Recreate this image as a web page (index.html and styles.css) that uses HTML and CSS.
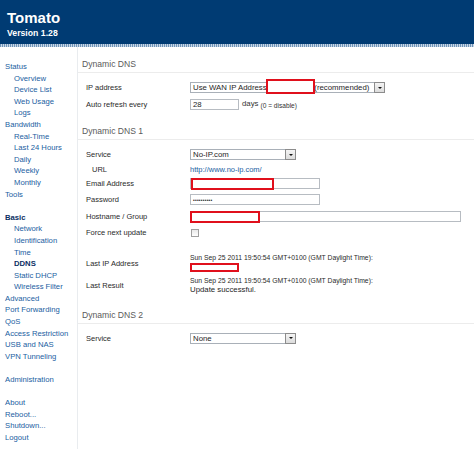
FILE: index.html
```html
<!DOCTYPE html>
<html>
<head>
<meta charset="utf-8">
<title>Tomato</title>
<link rel="stylesheet" href="styles.css">
</head>
<body>
<header class="header">
  <div class="title">Tomato</div>
  <div class="version">Version 1.28</div>
</header>
<div class="layout">
  <nav class="sidebar">
    <a class="top">Status</a>
    <a class="sub">Overview</a>
    <a class="sub">Device List</a>
    <a class="sub">Web Usage</a>
    <a class="sub">Logs</a>
    <a class="top">Bandwidth</a>
    <a class="sub">Real-Time</a>
    <a class="sub">Last 24 Hours</a>
    <a class="sub">Daily</a>
    <a class="sub">Weekly</a>
    <a class="sub">Monthly</a>
    <a class="top">Tools</a>
    <div class="gap"></div>
    <a class="top active">Basic</a>
    <a class="sub">Network</a>
    <a class="sub">Identification</a>
    <a class="sub">Time</a>
    <a class="sub active">DDNS</a>
    <a class="sub">Static DHCP</a>
    <a class="sub">Wireless Filter</a>
    <a class="top">Advanced</a>
    <a class="top">Port Forwarding</a>
    <a class="top">QoS</a>
    <a class="top">Access Restriction</a>
    <a class="top">USB and NAS</a>
    <a class="top">VPN Tunneling</a>
    <div class="gap"></div>
    <a class="top">Administration</a>
    <div class="gap"></div>
    <a class="top">About</a>
    <a class="top">Reboot...</a>
    <a class="top">Shutdown...</a>
    <a class="top">Logout</a>
  </nav>
  <main class="main">
    <section class="section first">
      <div class="heading">Dynamic DNS</div>
      <div class="grid">
        <div class="label">IP address</div>
        <div class="field">
          <div class="select wide">
            <span class="sel-text">Use WAN IP Address&nbsp;&nbsp;&nbsp;&nbsp;&nbsp;&nbsp;&nbsp;&nbsp;&nbsp;&nbsp;&nbsp;&nbsp;&nbsp;&nbsp;&nbsp;&nbsp;&nbsp;&nbsp;&nbsp;&nbsp;&nbsp;&nbsp;(recommended)</span>
            <span class="arrow"></span>
            <span class="redact ip-redact"></span>
          </div>
        </div>
        <div class="label">Auto refresh every</div>
        <div class="field">
          <div class="input small">28</div>
          <span class="unit">days</span>
          <span class="hint">(0 = disable)</span>
        </div>
      </div>
    </section>

    <section class="section">
      <div class="heading">Dynamic DNS 1</div>
      <div class="grid">
        <div class="label">Service</div>
        <div class="field">
          <div class="select mid">
            <span class="sel-text">No-IP.com</span>
            <span class="arrow"></span>
          </div>
        </div>
        <div class="label indent url-row">URL</div>
        <div class="field url-row"><a class="link">http://www.no-ip.com/</a></div>
        <div class="label">Email Address</div>
        <div class="field">
          <div class="input med"><span class="redact email-redact"></span></div>
        </div>
        <div class="label">Password</div>
        <div class="field">
          <div class="input med dots">••••••••••</div>
        </div>
        <div class="label">Hostname / Group</div>
        <div class="field">
          <div class="input long"><span class="redact host-redact"></span></div>
        </div>
        <div class="label">Force next update</div>
        <div class="field">
          <span class="checkbox"></span>
        </div>
        <div class="label tall first-tall">Last IP Address</div>
        <div class="field tall first-tall stack">
          <div class="stamp">Sun Sep 25 2011 19:50:54 GMT+0100 (GMT Daylight Time):</div>
          <div class="redact-box"></div>
        </div>
        <div class="label tall">Last Result</div>
        <div class="field tall stack">
          <div class="stamp">Sun Sep 25 2011 19:50:54 GMT+0100 (GMT Daylight Time):</div>
          <div class="result">Update successful.</div>
        </div>
      </div>
    </section>

    <section class="section">
      <div class="heading">Dynamic DNS 2</div>
      <div class="grid">
        <div class="label">Service</div>
        <div class="field">
          <div class="select mid">
            <span class="sel-text">None</span>
            <span class="arrow"></span>
          </div>
        </div>
      </div>
    </section>
  </main>
</div>
</body>
</html>
```

FILE: styles.css
```css
* { box-sizing: border-box; }

html, body {
  margin: 0;
  padding: 0;
  background: #ffffff;
  font-family: "Liberation Sans", Arial, sans-serif;
  color: #2a2a2a;
}

.header {
  height: 47px;
  background-color: #003b73;
  padding: 9px 0 0 7px;
  background-image: repeating-linear-gradient(90deg, #6f93b8 0 1px, #c9d8e7 1px 2px);
  background-size: 100% 3px;
  background-repeat: no-repeat;
  background-position: 0 44px;
}

.title {
  color: #ffffff;
  font-weight: bold;
  font-size: 15px;
  line-height: 17px;
}

.version {
  color: #ffffff;
  font-weight: bold;
  font-size: 8.7px;
  line-height: 10px;
  margin-top: 2px;
}

.layout {
  display: flex;
  align-items: stretch;
  min-height: 402px;
}

.sidebar {
  width: 78px;
  flex: none;
  border-right: 1px solid #e9ecef;
  padding-top: 14px;
  display: flex;
  flex-direction: column;
}

.sidebar a {
  display: block;
  font-size: 7.7px;
  line-height: 11.6px;
  color: #22609f;
  white-space: nowrap;
}

.sidebar a.top { padding-left: 5px; }
.sidebar a.sub { padding-left: 14px; }
.sidebar a.active { color: #0c2f63; font-weight: bold; }
.sidebar .gap { height: 11.6px; flex: none; }

.main {
  flex: 1;
  padding-top: 12px;
}

.section { margin-top: 13.5px; }
.section.first { margin-top: 0; }

.heading {
  font-size: 8.6px;
  line-height: 11px;
  color: #5a5a5a;
  padding: 0 0 2px 4px;
  border-bottom: 1px solid #ececec;
}

.grid {
  display: grid;
  grid-template-columns: 104px 1fr;
  padding: 6.5px 0 0 8px;
}

.label {
  font-size: 7.5px;
  color: #2a2a2a;
  height: 16.5px;
  display: flex;
  align-items: center;
  white-space: nowrap;
}

.label.indent { padding-left: 6px; }

.field {
  height: 16.5px;
  display: flex;
  align-items: center;
  gap: 4px;
  white-space: nowrap;
}

.url-row { height: 12px; }

.tall { height: 22px; }
.first-tall { margin-top: 11px; }

.field.stack {
  flex-direction: column;
  align-items: flex-start;
  justify-content: center;
  gap: 0;
}

.select {
  position: relative;
  height: 11px;
  border: 1px solid #a9b0b8;
  background: #ffffff;
  display: flex;
  align-items: center;
  padding-left: 2px;
  font-size: 7.8px;
  color: #1e1e1e;
}

.select.wide { width: 195px; }
.select.mid { width: 106px; }

.sel-text { flex: 1; overflow: hidden; }

.arrow {
  width: 11px;
  height: 11px;
  margin: -1px -1px -1px 0;
  border: 1px solid #8c8c8c;
  background: linear-gradient(#f4f4f4, #dcdcdc);
  position: relative;
  flex: none;
}

.arrow::after {
  content: "";
  position: absolute;
  left: 2.5px;
  top: 3.5px;
  border-left: 2.5px solid transparent;
  border-right: 2.5px solid transparent;
  border-top: 2.5px solid #111;
}

.redact {
  position: absolute;
  border: 2px solid #e0101c;
  background: #ffffff;
}

.ip-redact {
  left: 75px;
  top: -4px;
  width: 49px;
  height: 15px;
}

.input {
  position: relative;
  height: 11px;
  border: 1px solid #b7bcc2;
  background: #ffffff;
  font-size: 7.8px;
  color: #1e1e1e;
  padding-left: 2px;
  display: flex;
  align-items: center;
}

.input.small { width: 49px; }
.input.med { width: 130px; }
.input.long { width: 271px; }

.input.dots {
  font-size: 5px;
  letter-spacing: 0.2px;
}

.email-redact {
  left: 0;
  top: -1px;
  width: 83px;
  height: 12px;
}

.host-redact {
  left: -1px;
  top: -1px;
  width: 70px;
  height: 12px;
}

.unit {
  font-size: 7.8px;
  color: #333;
  margin-left: -1px;
  position: relative;
  top: -1px;
}

.hint {
  font-size: 6.6px;
  color: #333;
  margin-left: -2px;
  position: relative;
  top: 1px;
}

.link {
  font-size: 7.5px;
  color: #22609f;
}

.checkbox {
  width: 8px;
  height: 8px;
  border: 1px solid #a0a0a0;
  background: linear-gradient(#e9e9e9, #ffffff);
  margin-left: 1px;
}

.stamp {
  font-size: 6.8px;
  line-height: 8px;
  color: #2a2a2a;
}

.redact-box {
  width: 49px;
  height: 9px;
  border: 2px solid #e0101c;
  margin-top: 1px;
}

.result {
  font-size: 7.8px;
  line-height: 9px;
  color: #1e1e1e;
}
```
